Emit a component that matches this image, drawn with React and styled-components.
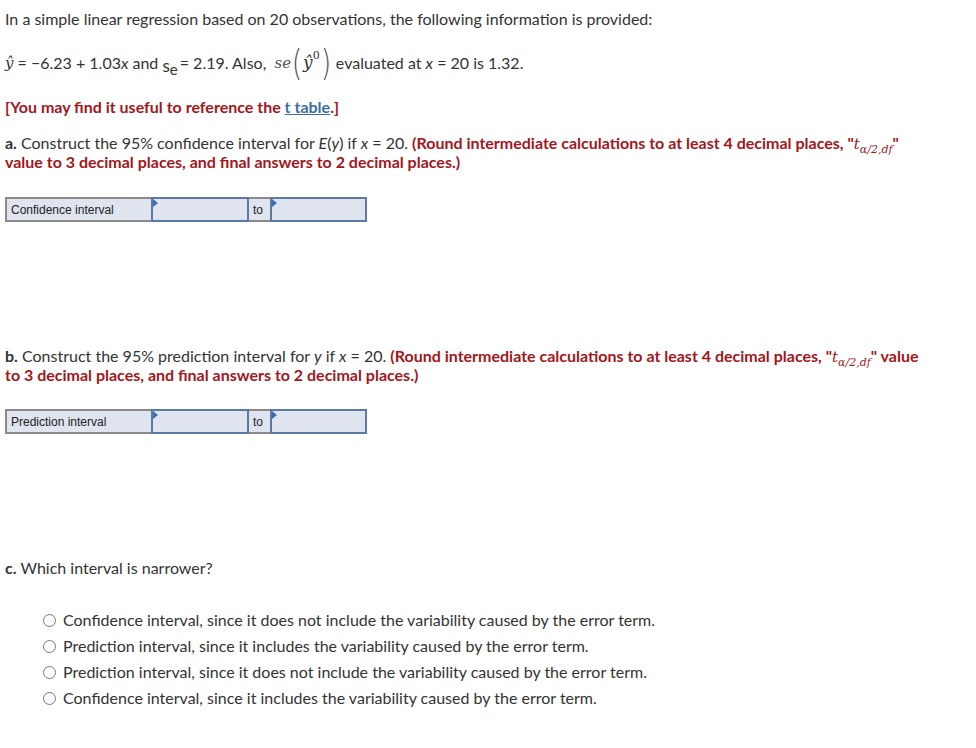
import React from 'react'
import styled, { createGlobalStyle } from 'styled-components'

const GlobalStyle = createGlobalStyle`
    body {
        margin: 0;
        background: #fff;
        font-family: Lato, "Open Sans", sans-serif;
        color: #333;
    }
`

const Page = styled.div`
    padding: 9px 5px 0 5px;
    font-size: 16px;
    line-height: 20px;
`

const Para = styled.p`
    margin: ${p => p.$mt || 0}px 0 0 0;
    white-space: nowrap;
    line-height: ${p => p.$lh || 20}px;
`

const Formula = styled.div`
    display: flex;
    align-items: center;
    height: 40px;
    margin-top: 14px;
    white-space: pre;
`

const MathI = styled.span`
    font-family: "DejaVu Serif", "Liberation Serif", serif;
    font-style: italic;
    font-size: ${p => p.$size || 15}px;
`

const Var = styled.i`
    font-style: italic;
`

const Sub = styled.span`
    font-size: 17px;
    position: relative;
    top: 3px;
    margin-right: 2px;
`

const SubE = styled.span`
    font-size: 15px;
    position: relative;
    top: 3px;
`

const Paren = styled.span`
    font-family: "DejaVu Sans", sans-serif;
    font-size: 36px;
    font-weight: 200;
    line-height: 36px;
    color: #555;
    display: inline-block;
    transform: scaleX(0.75);
    margin: 0 -1px;
`

const Sup = styled.span`
    font-size: 11px;
    font-style: normal;
    position: relative;
    top: -9px;
`

const Red = styled.span`
    color: #a3161b;
    font-weight: 700;
`

const Link = styled.a`
    color: #3a6ea5;
    text-decoration: underline;
`

const Label = styled.b`
    font-weight: 700;
`

const TMath = styled.span`
    font-family: "DejaVu Serif", "Liberation Serif", serif;
    font-style: italic;
    font-weight: 400;
    font-size: 15px;
    line-height: 0;
`

const TSub = styled.span`
    font-size: 11px;
    position: relative;
    top: 4px;
`

const AnswerTable = styled.table`
    border-collapse: collapse;
    table-layout: fixed;
    margin-top: ${p => p.$mt}px;
    font-family: "Liberation Sans", Arial, sans-serif;
    font-size: 12px;
    line-height: 14px;
    color: #222;
    border: 2px solid #8a8a8a;
`

const Cell = styled.td`
    background: #dfe4ef;
    border: 1px solid #8a8a8a;
    height: 21px;
    padding: 0 4px;
    width: ${p => p.$w}px;
`

const InputCell = styled.td`
    background: #dfe4ef;
    border: 2px solid #5b78a6;
    padding: 0;
    width: ${p => p.$w}px;
    position: relative;
`

const Flag = styled.span`
    position: absolute;
    left: 0;
    top: 0;
    width: 0;
    height: 0;
    border-top: 4px solid transparent;
    border-bottom: 4px solid transparent;
    border-left: 5px solid #3b6fb0;
`

const Options = styled.div`
    margin-top: 32px;
    padding-left: 38px;
    display: flex;
    flex-direction: column;
    gap: 6px;
`

const Option = styled.label`
    display: flex;
    align-items: center;
    gap: 7px;
    height: 20px;
`

const Radio = styled.span`
    width: 11px;
    height: 11px;
    border: 1px solid #777;
    border-radius: 50%;
    background: #fff;
    flex: none;
`

function Interval({ label, mt }) {
    return (
        <AnswerTable $mt={mt}>
            <tbody>
                <tr>
                    <Cell $w={136}>{label}</Cell>
                    <InputCell $w={94}><Flag /></InputCell>
                    <Cell $w={13}>to</Cell>
                    <InputCell $w={93}><Flag /></InputCell>
                </tr>
            </tbody>
        </AnswerTable>
    )
}

const TValue = () => (
    <TMath>t<TSub>α/2,df</TSub></TMath>
)

export default function App() {
    return (
        <Page>
            <GlobalStyle />
            <Para>In a simple linear regression based on 20 observations, the following information is provided:</Para>
            <Formula>
                <MathI>ŷ</MathI> = −6.23 + 1.03<Var>x</Var> and <Sub>s<SubE>e</SubE></Sub>= 2.19. Also,{'  '}
                <MathI style={{ color: '#555' }}>se</MathI>{' '}
                <Paren>(</Paren>
                <MathI $size={17}>ŷ<Sup>0</Sup></MathI>
                <Paren>)</Paren> evaluated at <Var>x</Var> = 20 is 1.32.
            </Formula>
            <Para $mt={14}>
                <Red>[You may find it useful to reference the <Link href="#">t table</Link>.]</Red>
            </Para>
            <Para $mt={16} $lh={19}>
                <Label>a.</Label> Construct the 95% confidence interval for <Var>E</Var>(<Var>y</Var>) if <Var>x</Var> = 20. <Red>(Round intermediate calculations to at least 4 decimal places, "<TValue />"</Red>
                <br />
                <Red>value to 3 decimal places, and final answers to 2 decimal places.)</Red>
            </Para>
            <Interval label="Confidence interval" mt={26} />
            <Para $mt={124} $lh={19}>
                <Label>b.</Label> Construct the 95% prediction interval for <Var>y</Var> if <Var>x</Var> = 20. <Red>(Round intermediate calculations to at least 4 decimal places, "<TValue />" value</Red>
                <br />
                <Red>to 3 decimal places, and final answers to 2 decimal places.)</Red>
            </Para>
            <Interval label="Prediction interval" mt={25} />
            <Para $mt={124}>
                <Label>c.</Label> Which interval is narrower?
            </Para>
            <Options>
                <Option><Radio />Confidence interval, since it does not include the variability caused by the error term.</Option>
                <Option><Radio />Prediction interval, since it includes the variability caused by the error term.</Option>
                <Option><Radio />Prediction interval, since it does not include the variability caused by the error term.</Option>
                <Option><Radio />Confidence interval, since it includes the variability caused by the error term.</Option>
            </Options>
        </Page>
    )
}
